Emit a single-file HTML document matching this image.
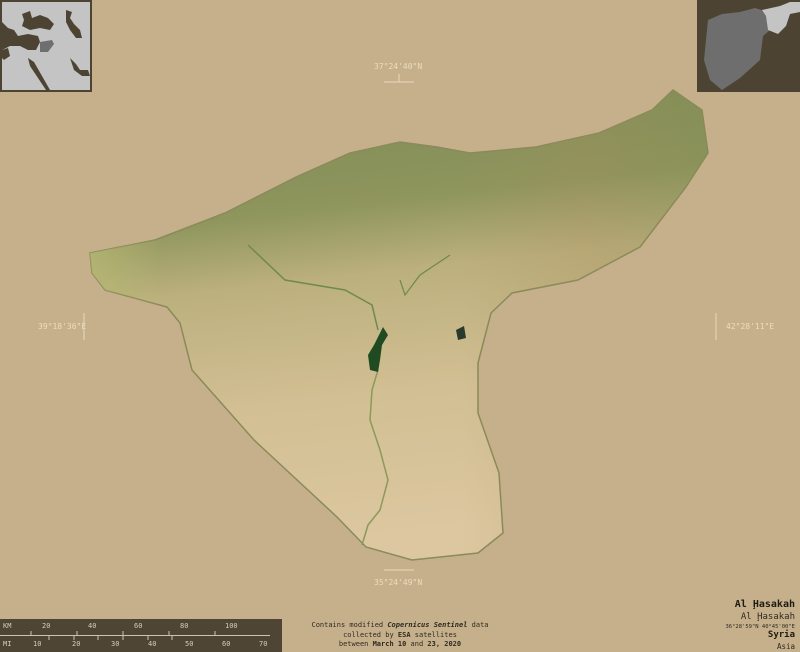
<!DOCTYPE html>
<html><head><meta charset="utf-8"><style>
html,body{margin:0;padding:0}
body{width:800px;height:652px;background:#c6b08b;position:relative;overflow:hidden;font-family:"DejaVu Sans Mono","Liberation Mono",monospace}
.t{position:absolute;white-space:nowrap}
</style></head><body>
<svg width="800" height="652" style="position:absolute;left:0;top:0">
<defs>
<linearGradient id="g" x1="0" y1="0" x2="0.15" y2="1">
<stop offset="0" stop-color="#7c8a55"/>
<stop offset="0.3" stop-color="#8e955d"/>
<stop offset="0.45" stop-color="#bcb07e"/>
<stop offset="0.7" stop-color="#d2bf93"/>
<stop offset="1" stop-color="#dcc7a0"/>
</linearGradient>
<linearGradient id="g2" x1="0" y1="0" x2="1" y2="0">
<stop offset="0" stop-color="#b9bb74" stop-opacity="0.7"/>
<stop offset="0.12" stop-color="#b9bb74" stop-opacity="0"/>
<stop offset="0.6" stop-color="#a88c5c" stop-opacity="0"/>
<stop offset="0.8" stop-color="#a88c5c" stop-opacity="0.25"/>
<stop offset="1" stop-color="#7f8d52" stop-opacity="0.3"/>
</linearGradient>
</defs>
<!-- left inset -->
<rect x="0" y="0" width="92" height="92" fill="#4d4333"/>
<rect x="2" y="2" width="88" height="88" fill="#c4c4c4"/>
<path d="M22,14 L30,11 L32,18 L40,15 L48,18 L54,24 L50,30 L40,28 L30,30 L22,26 L24,20Z" fill="#4d4333"/>
<path d="M66,10 L72,12 L70,18 L74,24 L80,30 L82,38 L76,38 L70,30 L66,22Z" fill="#4d4333"/>
<path d="M2,22 L8,28 L14,30 L18,36 L28,34 L38,36 L40,42 L36,50 L28,50 L20,46 L10,46 L2,50Z" fill="#4d4333"/>
<path d="M2,50 L8,48 L10,56 L4,60 L2,58Z" fill="#4d4333"/>
<path d="M28,58 L34,62 L42,76 L50,90 L46,90 L38,78 L30,66Z" fill="#4d4333"/>
<path d="M70,58 L76,64 L80,70 L88,70 L90,76 L82,76 L74,70Z" fill="#4d4333"/>
<path d="M40,42 L52,40 L54,44 L48,52 L40,52Z" fill="#6f6f6f"/>
<!-- right inset -->
<rect x="697" y="0" width="103" height="92" fill="#4d4333"/>
<path d="M708,20 L722,14 L740,12 L755,8 L768,12 L770,30 L763,36 L760,60 L740,78 L722,90 L710,80 L704,60 L706,40Z" fill="#6e6e6e"/>
<path d="M762,10 L780,6 L790,2 L800,2 L800,12 L790,14 L786,26 L778,34 L768,30 L766,16Z" fill="#c4c4c4"/>
<!-- coordinate markers -->
<line x1="384" y1="82" x2="414" y2="82" stroke="#e6d9be" stroke-width="1"/>
<line x1="399" y1="74" x2="399" y2="82" stroke="#e6d9be" stroke-width="1"/>
<line x1="84" y1="313" x2="84" y2="340" stroke="#e6d9be"/>
<line x1="716" y1="313" x2="716" y2="340" stroke="#e6d9be"/>
<line x1="384" y1="570" x2="414" y2="570" stroke="#e6d9be"/>
<!-- region -->
<path d="M90,253 L155,240 L225,213 L296,177 L350,153 L400,142 L437,147 L470,153 L536,147 L599,133 L652,110 L673,90 L702,110 L708,153 L686,187 L640,247 L578,280 L512,293 L491,313 L478,363 L478,413 L499,473 L503,533 L478,553 L412,560 L366,547 L337,517 L254,440 L192,370 L180,323 L167,307 L105,290 L92,273Z" fill="url(#g)" stroke="#8a8a5a" stroke-width="1.5"/>
<path d="M90,253 L155,240 L225,213 L296,177 L350,153 L400,142 L437,147 L470,153 L536,147 L599,133 L652,110 L673,90 L702,110 L708,153 L686,187 L640,247 L578,280 L512,293 L491,313 L478,363 L478,413 L499,473 L503,533 L478,553 L412,560 L366,547 L337,517 L254,440 L192,370 L180,323 L167,307 L105,290 L92,273Z" fill="url(#g2)"/>
<path d="M248,245 L285,280 L345,290 L372,305 L378,330" fill="none" stroke="#6f8a4a" stroke-width="1.5"/>
<path d="M400,280 L405,295 L420,275 L450,255" fill="none" stroke="#6f8a4a" stroke-width="1.2"/>
<path d="M378,370 L372,390 L370,420 L380,450 L388,480 L380,510 L368,525 L362,545" fill="none" stroke="#8a9a5a" stroke-width="1.5"/>
<path d="M383,327 L388,335 L382,345 L380,360 L378,372 L370,370 L368,355 L374,345 L379,335Z" fill="#1f4a22"/>
<path d="M456,330 L464,326 L466,338 L458,340Z" fill="#2a3a2a"/>
</svg>
<div class="t" style="left:374px;top:62px;font-size:8px;color:#e9dcc2">37°24'40"N</div>
<div class="t" style="left:38px;top:322px;font-size:8px;color:#e9dcc2">39°18'36"E</div>
<div class="t" style="left:726px;top:322px;font-size:8px;color:#e9dcc2">42°28'11"E</div>
<div class="t" style="left:374px;top:578px;font-size:8px;color:#e9dcc2">35°24'49"N</div>
<!-- scale bar -->
<div style="position:absolute;left:0;top:619px;width:282px;height:33px;background:#4f4534"></div>
<svg width="282" height="33" style="position:absolute;left:0;top:619px">
<line x1="0" y1="16.5" x2="270" y2="16.5" stroke="#cfc3ab" stroke-width="1"/>
<g stroke="#cfc3ab">
<line x1="31" y1="12" x2="31" y2="16"/><line x1="77" y1="12" x2="77" y2="16"/><line x1="123" y1="12" x2="123" y2="16"/><line x1="169" y1="12" x2="169" y2="16"/><line x1="215" y1="12" x2="215" y2="16"/>
<line x1="49" y1="17" x2="49" y2="21"/><line x1="74" y1="17" x2="74" y2="21"/><line x1="98" y1="17" x2="98" y2="21"/><line x1="123" y1="17" x2="123" y2="21"/><line x1="148" y1="17" x2="148" y2="21"/><line x1="172" y1="17" x2="172" y2="21"/>
</g>
</svg>
<div class="t" style="left:3px;top:622px;font-size:7px;color:#d8ccb4">KM</div>
<div class="t" style="left:3px;top:640px;font-size:7px;color:#d8ccb4">MI</div>
<div class="t" style="left:42px;top:622px;font-size:7px;color:#d8ccb4">20</div>
<div class="t" style="left:88px;top:622px;font-size:7px;color:#d8ccb4">40</div>
<div class="t" style="left:134px;top:622px;font-size:7px;color:#d8ccb4">60</div>
<div class="t" style="left:180px;top:622px;font-size:7px;color:#d8ccb4">80</div>
<div class="t" style="left:225px;top:622px;font-size:7px;color:#d8ccb4">100</div>
<div class="t" style="left:33px;top:640px;font-size:7px;color:#d8ccb4">10</div>
<div class="t" style="left:72px;top:640px;font-size:7px;color:#d8ccb4">20</div>
<div class="t" style="left:111px;top:640px;font-size:7px;color:#d8ccb4">30</div>
<div class="t" style="left:148px;top:640px;font-size:7px;color:#d8ccb4">40</div>
<div class="t" style="left:185px;top:640px;font-size:7px;color:#d8ccb4">50</div>
<div class="t" style="left:222px;top:640px;font-size:7px;color:#d8ccb4">60</div>
<div class="t" style="left:259px;top:640px;font-size:7px;color:#d8ccb4">70</div>
<!-- credits -->
<div class="t" style="left:300px;top:621px;width:200px;text-align:center;font-size:7px;line-height:9.5px;color:#2e2a22">Contains modified <b><i>Copernicus Sentinel</i></b> data<br>collected by <b>ESA</b> satellites<br>between <b>March 10</b> and <b>23, 2020</b></div>
<!-- right labels -->
<div class="t" style="right:5px;top:599px;font-size:10px;font-weight:bold;color:#1e1a14">Al Ḩasakah</div>
<div class="t" style="right:5px;top:612px;font-size:9px;color:#2e2a22">Al Ḩasakah</div>
<div class="t" style="right:5px;top:624px;font-size:5.5px;color:#2e2a22">36°28'59"N 40°45'00"E</div>
<div class="t" style="right:5px;top:630px;font-size:9px;font-weight:bold;color:#1e1a14">Syria</div>
<div class="t" style="right:5px;top:642px;font-size:7.5px;color:#2e2a22">Asia</div>
</body></html>
